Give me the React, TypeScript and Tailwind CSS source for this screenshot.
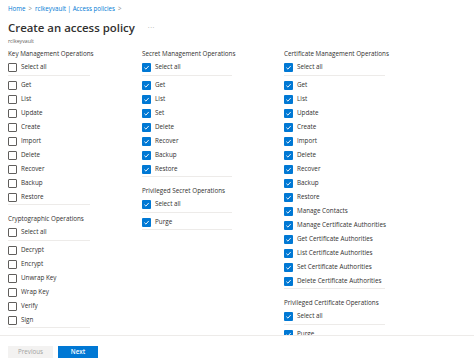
import React from 'react';

const FONT = { fontFamily: '"Segoe UI", "Open Sans", "Noto Sans", sans-serif' };

interface Group {
  title: string;
  checked: boolean;
  items: string[];
}

const columns: { width: string; groups: Group[] }[] = [
  {
    width: 'w-[82px]',
    groups: [
      {
        title: 'Key Management Operations',
        checked: false,
        items: ['Get', 'List', 'Update', 'Create', 'Import', 'Delete', 'Recover', 'Backup', 'Restore'],
      },
      {
        title: 'Cryptographic Operations',
        checked: false,
        items: ['Decrypt', 'Encrypt', 'Unwrap Key', 'Wrap Key', 'Verify', 'Sign'],
      },
    ],
  },
  {
    width: 'w-[90px]',
    groups: [
      {
        title: 'Secret Management Operations',
        checked: true,
        items: ['Get', 'List', 'Set', 'Delete', 'Recover', 'Backup', 'Restore'],
      },
      { title: 'Privileged Secret Operations', checked: true, items: ['Purge'] },
    ],
  },
  {
    width: 'w-[101px]',
    groups: [
      {
        title: 'Certificate Management Operations',
        checked: true,
        items: [
          'Get', 'List', 'Update', 'Create', 'Import', 'Delete', 'Recover', 'Backup', 'Restore',
          'Manage Contacts', 'Manage Certificate Authorities', 'Get Certificate Authorities',
          'List Certificate Authorities', 'Set Certificate Authorities', 'Delete Certificate Authorities',
        ],
      },
      { title: 'Privileged Certificate Operations', checked: true, items: ['Purge'] },
    ],
  },
];

const Box = ({ checked }: { checked: boolean }) =>
  checked ? (
    <span className="w-[9px] h-[9px] rounded-[1px] bg-[#0078d4] flex items-center justify-center shrink-0">
      <svg width="7" height="7" viewBox="0 0 10 10">
        <path d="M2 5.2 L4.2 7.3 L8.2 2.8" fill="none" stroke="white" strokeWidth="1.3" />
      </svg>
    </span>
  ) : (
    <span className="w-[9px] h-[9px] rounded-[1px] border border-[#605e5c] bg-white shrink-0" />
  );

const Row = ({ label, checked }: { label: string; checked: boolean }) => (
  <div className="h-[14px] flex items-center gap-[4px]">
    <Box checked={checked} />
    <span className="text-[6.3px] text-[#323130] whitespace-nowrap">{label}</span>
  </div>
);

export default function App() {
  return (
    <div className="h-[361px] w-[474px] bg-white flex flex-col overflow-hidden" style={FONT}>
      <div className="flex-1 overflow-hidden pl-[8px] pt-[4px]">
        <div className="h-[10px] leading-[10px] text-[6.2px] text-[#0078d4] flex items-center gap-[3px]">
          <span>Home</span>
          <span className="text-[#8a8886]">&gt;</span>
          <span>rclkeyvault | Access policies</span>
          <span className="text-[#8a8886]">&gt;</span>
        </div>
        <div className="mt-[6px] h-[16px] flex items-center gap-[13px]">
          <h1 className="text-[11.4px] leading-[16px] font-semibold text-[#323130] whitespace-nowrap">Create an access policy</h1>
          <span className="text-[7px] text-[#a19f9d] tracking-[0.5px]">···</span>
        </div>
        <div className="mt-[1px] h-[8px] leading-[8px] text-[5.2px] text-[#605e5c]">rclkeyvault</div>
        <div className="mt-[4px] flex gap-[52px]">
          {columns.map((col, ci) => (
            <div key={ci} className={col.width}>
              {col.groups.map((g, gi) => (
                <div key={gi} className={gi > 0 ? 'mt-[9px]' : ''}>
                  <div className="h-[10px] leading-[10px] text-[6.3px] text-[#323130] whitespace-nowrap">{g.title}</div>
                  <div className="mt-[1px] h-[16px] pb-[1px] border-b border-[#edebe9] flex items-center gap-[4px]">
                    <Box checked={g.checked} />
                    <span className="text-[6.3px] text-[#323130]">Select all</span>
                  </div>
                  <div className="pt-[2px] border-b border-[#edebe9]">
                    {g.items.map((it) => (
                      <Row key={it} label={it} checked={g.checked} />
                    ))}
                  </div>
                </div>
              ))}
            </div>
          ))}
        </div>
      </div>
      <div className="h-[26px] shrink-0 border-t border-[#edebe9] pl-[8px] pt-[10px] flex items-start gap-[5px]">
        <button className="w-[45px] h-[12px] bg-[#f3f2f1] text-[#a19f9d] text-[6.2px] flex items-center justify-center">
          Previous
        </button>
        <button className="w-[40px] h-[12px] bg-[#0078d4] text-white text-[6.2px] font-semibold flex items-center justify-center">
          Next
        </button>
      </div>
    </div>
  );
}
